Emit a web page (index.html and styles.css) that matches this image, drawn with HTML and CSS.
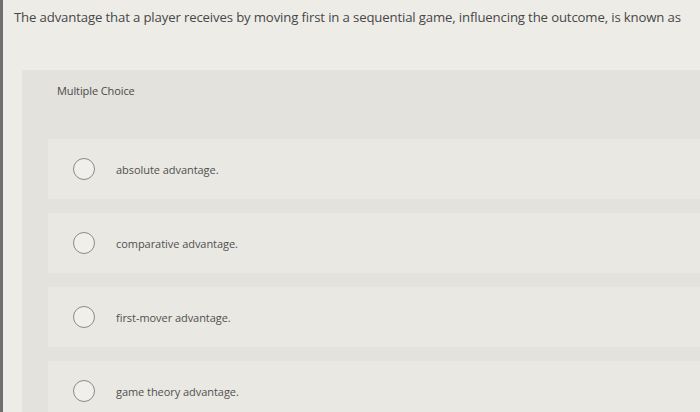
FILE: index.html
```html
<!DOCTYPE html>
<html>
<head>
<meta charset="utf-8">
<link rel="stylesheet" href="styles.css">
</head>
<body>
<div class="screen">
  <p class="question">The advantage that a player receives by moving first in a sequential game, influencing the outcome, is known as</p>
  <section class="panel">
    <div class="panel-head">Multiple Choice</div>
    <div class="options">
      <label class="option"><span class="radio"></span><span class="opt-text">absolute advantage.</span></label>
      <label class="option"><span class="radio"></span><span class="opt-text">comparative advantage.</span></label>
      <label class="option"><span class="radio"></span><span class="opt-text">first-mover advantage.</span></label>
      <label class="option"><span class="radio"></span><span class="opt-text">game theory advantage.</span></label>
    </div>
  </section>
</div>
</body>
</html>
```

FILE: styles.css
```css
html, body {
  margin: 0;
  padding: 0;
}
body {
  width: 700px;
  height: 412px;
  overflow: hidden;
  background: #eeece7;
  font-family: "Open Sans", Lato, sans-serif;
}
.screen {
  height: 412px;
  border-left: 3px solid #6f6f6d;
  box-sizing: border-box;
  display: flex;
  flex-direction: column;
}
.question {
  margin: 0;
  padding: 8px 0 0 11px;
  font-size: 13.2px;
  line-height: 19px;
  color: #474747;
  white-space: nowrap;
  letter-spacing: -0.15px;
}
.panel {
  margin: 43px 0 0 19px;
  flex: 1;
  background: #e4e2dd;
  display: flex;
  flex-direction: column;
}
.panel-head {
  padding: 13px 0 0 35px;
  height: 50px;
  box-sizing: border-box;
  font-size: 11px;
  color: #4a4a4a;
  line-height: 15px;
  letter-spacing: -0.1px;
}
.options {
  margin: 19px 0 0 26px;
  display: flex;
  flex-direction: column;
  gap: 14px;
}
.option {
  height: 60px;
  background: #e9e8e3;
  display: flex;
  align-items: center;
  padding-left: 25px;
}
.radio {
  width: 20px;
  height: 20px;
  border: 1.5px solid #8a8a88;
  border-radius: 50%;
  background: #f0efeb;
  flex: none;
}
.opt-text {
  margin-left: 21px;
  font-size: 11px;
  color: #505050;
  letter-spacing: -0.05px;
}
```
